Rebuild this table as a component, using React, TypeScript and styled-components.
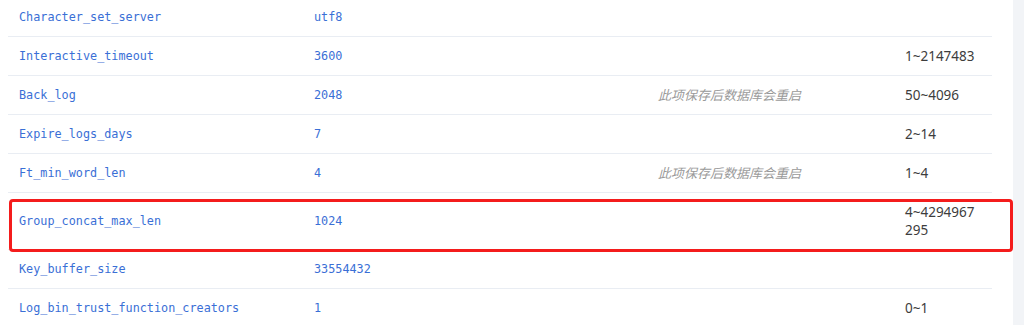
import React from "react";
import styled, { createGlobalStyle } from "styled-components";

const GlobalStyle = createGlobalStyle`
  html, body {
    margin: 0;
    padding: 0;
    background: #fff;
    overflow: hidden;
  }
`;

const Page = styled.div`
  display: flex;
  width: 1024px;
  height: 325px;
  overflow: hidden;
`;

const Main = styled.div`
  flex: 1;
  padding: 0 21px 0 8px;
`;

const ScrollTrack = styled.div`
  width: 11px;
  background: #f2f4f7;
`;

const Table = styled.table`
  width: 100%;
  margin-top: -2px;
  border-collapse: collapse;
  table-layout: fixed;
`;

const Row = styled.tr`
  border-bottom: 1px solid #e9edf3;
`;

type CellProps = {
  $kind: "name" | "value" | "note" | "range";
};

const Cell = styled.td<CellProps>`
  position: relative;
  padding: ${(p) => (p.$kind === "range" ? "10px 15px 10px 11px" : "10px 11px")};
  line-height: 18px;
  vertical-align: middle;
  word-break: break-all;
  font-family: ${(p) =>
    p.$kind === "name" || p.$kind === "value"
      ? '"DejaVu Sans Mono", monospace'
      : p.$kind === "note"
      ? '"Noto Sans CJK SC", sans-serif'
      : '"Noto Sans", sans-serif'};
  font-size: ${(p) =>
    p.$kind === "name" || p.$kind === "value"
      ? "11.8px"
      : p.$kind === "range"
      ? "13.5px"
      : "13px"};
  font-style: ${(p) => (p.$kind === "note" ? "italic" : "normal")};
  color: ${(p) =>
    p.$kind === "name" || p.$kind === "value"
      ? "#3a6fd6"
      : p.$kind === "note"
      ? "#9a9a9a"
      : "#3d3d3d"};
`;

const Highlight = styled.div`
  position: absolute;
  top: 6px;
  left: 1px;
  width: 1004px;
  height: 53px;
  box-sizing: border-box;
  border: 3px solid #f41c1c;
  border-radius: 4px;
  pointer-events: none;
  z-index: 1;
`;

type Param = {
  name: string;
  value: string;
  note?: string;
  range?: string;
  marked?: boolean;
};

const RESTART = "此项保存后数据库会重启";

const params: Param[] = [
  { name: "Character_set_server", value: "utf8" },
  { name: "Interactive_timeout", value: "3600", range: "1~2147483" },
  { name: "Back_log", value: "2048", note: RESTART, range: "50~4096" },
  { name: "Expire_logs_days", value: "7", range: "2~14" },
  { name: "Ft_min_word_len", value: "4", note: RESTART, range: "1~4" },
  {
    name: "Group_concat_max_len",
    value: "1024",
    range: "4~4294967295",
    marked: true,
  },
  { name: "Key_buffer_size", value: "33554432" },
  { name: "Log_bin_trust_function_creators", value: "1", range: "0~1" },
];

const App: React.FC = () => {
  return (
    <Page>
      <GlobalStyle />
      <Main>
        <Table>
          <colgroup>
            <col style={{ width: 295 }} />
            <col style={{ width: 344 }} />
            <col style={{ width: 247 }} />
            <col style={{ width: 98 }} />
          </colgroup>
          <tbody>
            {params.map((p) => (
              <Row key={p.name}>
                <Cell $kind="name">
                  {p.marked && <Highlight />}
                  {p.name}
                </Cell>
                <Cell $kind="value">{p.value}</Cell>
                <Cell $kind="note">{p.note}</Cell>
                <Cell $kind="range">{p.range}</Cell>
              </Row>
            ))}
          </tbody>
        </Table>
      </Main>
      <ScrollTrack />
    </Page>
  );
};

export default App;
